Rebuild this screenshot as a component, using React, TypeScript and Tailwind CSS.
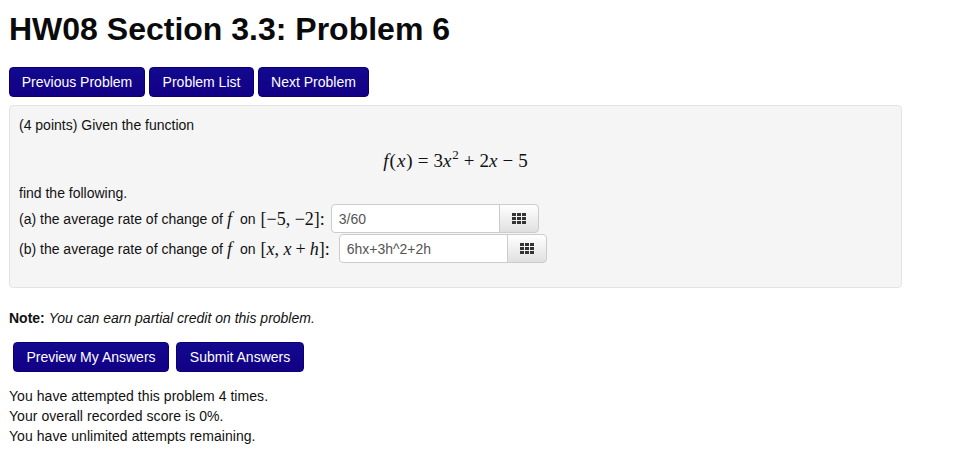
const sans = { fontFamily: '"Liberation Sans", Arial, sans-serif' };
const serif = { fontFamily: '"Liberation Serif", "Times New Roman", serif' };

function NavButton({ children, className = '' }: { children: React.ReactNode; className?: string }) {
  return (
    <button
      type="button"
      className={`h-[30px] rounded-[4px] border border-[#0a0070] bg-gradient-to-b from-[#120a8f] to-[#120085] text-center text-[14px] leading-[20px] text-white ${className}`}
    >
      {children}
    </button>
  );
}

function Grid() {
  return (
    <svg width="14" height="11" viewBox="0 0 14 11" fill="#333">
      {[0, 4, 8].map((y) =>
        [0, 5, 10].map((x) => <rect key={`${x}-${y}`} x={x} y={y} width="4" height="3" />),
      )}
    </svg>
  );
}

function Answer({ value, className = '' }: { value: string; className?: string }) {
  return (
    <span className={`flex h-[29px] ${className}`}>
      <span className="flex w-[169px] items-center rounded-l-[4px] border border-[#ccc] bg-white pl-[7px] text-[14px] text-[#555]">
        {value}
      </span>
      <span className="-ml-px flex w-[40px] items-center justify-center rounded-r-[4px] border border-[#ccc] bg-gradient-to-b from-[#fff] to-[#e0e0e0]">
        <Grid />
      </span>
    </span>
  );
}

export default function App() {
  return (
    <div className="h-[465px] w-[953px] overflow-hidden bg-white text-[14px] leading-[20px] text-[#111]" style={sans}>
      <div className="pl-[9px]">
        <h1 className="pt-[10px] text-[32px] font-bold leading-[38px] text-[#0a0a0a]">HW08 Section 3.3: Problem 6</h1>
        <div className="mt-[19px] flex gap-[4px]">
          <NavButton className="w-[136px]">Previous Problem</NavButton>
          <NavButton className="w-[105px]">Problem List</NavButton>
          <NavButton className="w-[111px]">Next Problem</NavButton>
        </div>
        <div className="mt-[8px] h-[183px] w-[893px] rounded-[4px] border border-[#e3e3e3] bg-[#f5f5f5] pl-[9px] pt-[9px]">
          <p>(4 points) Given the function</p>
          <div className="mt-[15px] h-[32px] pr-[9px] text-center text-[19px] leading-[22px]" style={serif}>
            <i className="mr-[1px]">f</i>(<i className="mx-[1px]">x</i>)<span className="mx-[5px]">=</span>3<i>x</i>
            <sup className="top-[-0.65em] ml-[1px] text-[13px]">2</sup>
            <span className="mx-[5px]">+</span>2<i>x</i>
            <span className="mx-[5px]">−</span>5
          </div>
          <p className="mt-[1px]">find the following.</p>
          <div className="mt-[1px] flex h-[29px] items-center">
            <span>(a) the average rate of change of</span>
            <i className="ml-[4px] text-[18px]" style={serif}>f</i>
            <span className="ml-[8px]">on</span>
            <span className="ml-[5px] text-[18px]" style={serif}>[−5, −2]:</span>
            <Answer value="3/60" className="ml-[6px]" />
          </div>
          <div className="mt-[1px] flex h-[29px] items-center">
            <span>(b) the average rate of change of</span>
            <i className="ml-[4px] text-[18px]" style={serif}>f</i>
            <span className="ml-[8px]">on</span>
            <span className="ml-[5px] text-[18px]" style={serif}>
              [<i>x</i>, <i>x</i>
              <span className="mx-[4px]">+</span>
              <i>h</i>]:
            </span>
            <Answer value="6hx+3h^2+2h" className="ml-[9px]" />
          </div>
        </div>
        <p className="mt-[20px]">
          <b>Note:</b> <i>You can earn partial credit on this problem.</i>
        </p>
        <div className="ml-[4px] mt-[14px] flex gap-[7px]">
          <NavButton className="w-[156px]">Preview My Answers</NavButton>
          <NavButton className="w-[128px]">Submit Answers</NavButton>
        </div>
        <div className="mt-[14px] tracking-[0.05px]">
          <p>You have attempted this problem 4 times.</p>
          <p>Your overall recorded score is 0%.</p>
          <p>You have unlimited attempts remaining.</p>
        </div>
      </div>
    </div>
  );
}
